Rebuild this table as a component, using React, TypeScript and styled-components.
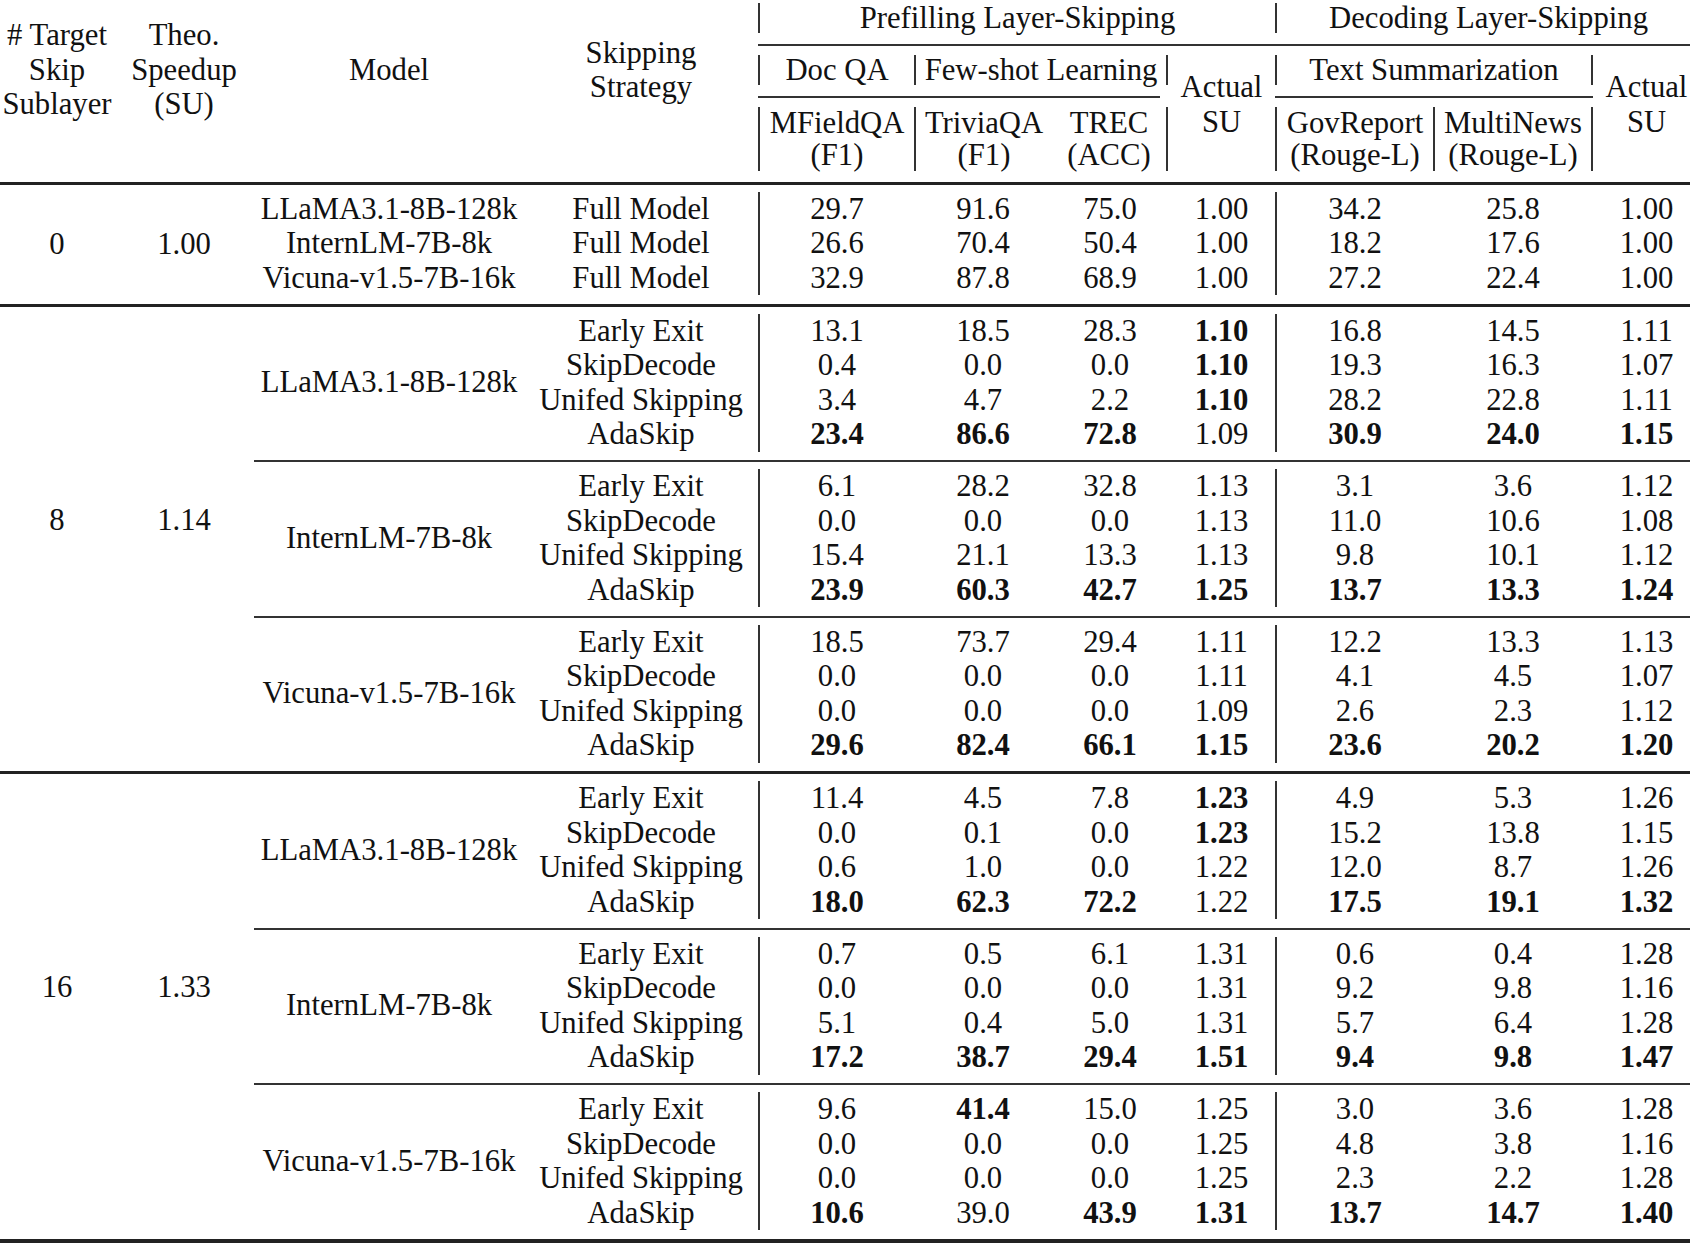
import React from "react";
import styled, { createGlobalStyle } from "styled-components";

const GlobalStyle = createGlobalStyle`
  html, body {
    margin: 0;
    padding: 0;
    background: #fff;
    overflow: hidden;
  }
  body {
    font-family: "Liberation Serif", "Times New Roman", serif;
    color: #111;
  }
`;

// column widths, left to right (last one runs a little past the viewport)
const COLS = [114, 140, 270, 234, 156, 138, 116, 107, 158, 160, 107];
const px = (list: number[]) => list.map((c) => `${c}px`).join(" ");

const THIN = "2px solid #333";
const BAR = "2px solid #333";

const Table = styled.div`
  width: 1700px;
  font-size: 30.7px;
  line-height: 34.5px;
`;

const Header = styled.div`
  display: grid;
  grid-template-columns: ${px(COLS)};
  grid-template-rows: 44px 2px 49.5px 2px 84px;
  border-bottom: 3px solid #222;
`;

const StubHead = styled.div<{ $col: number }>`
  grid-column: ${(p) => p.$col};
  grid-row: 1 / 6;
  align-self: center;
  margin-bottom: 41.5px;
  text-align: center;
  white-space: nowrap;
`;

const GroupHead = styled.div<{ $span: string }>`
  grid-column: ${(p) => p.$span};
  grid-row: 1;
  align-self: start;
  margin-top: 3px;
  line-height: 30px;
  text-align: center;
  border-left: ${BAR};
  white-space: nowrap;
`;

const TaskHead = styled.div<{ $span: string; $left?: boolean; $right?: boolean }>`
  grid-column: ${(p) => p.$span};
  grid-row: 3;
  align-self: start;
  margin-top: 9px;
  line-height: 30px;
  text-align: center;
  white-space: nowrap;
  border-left: ${(p) => (p.$left ? BAR : "none")};
  border-right: ${(p) => (p.$right ? BAR : "none")};
`;

const SpeedHead = styled.div<{ $span: string }>`
  grid-column: ${(p) => p.$span};
  grid-row: 3 / 6;
  align-self: center;
  margin-bottom: 18.5px;
  text-align: center;
  white-space: nowrap;
`;

const MetricHead = styled.div<{ $span: string; $left?: boolean; $right?: boolean }>`
  grid-column: ${(p) => p.$span};
  grid-row: 5;
  align-self: start;
  margin-top: 9.5px;
  line-height: 32px;
  text-align: center;
  white-space: nowrap;
  border-left: ${(p) => (p.$left ? BAR : "none")};
  border-right: ${(p) => (p.$right ? BAR : "none")};
`;

const HeadRule = styled.div<{ $row: number; $span: string; $trim?: number }>`
  grid-column: ${(p) => p.$span};
  grid-row: ${(p) => p.$row};
  margin-right: ${(p) => p.$trim ?? 0}px;
  background: #333;
`;

const Section = styled.div<{ $last?: boolean }>`
  display: flex;
  border-bottom: ${(p) => (p.$last ? 4 : 3)}px solid #222;
`;

const SpanCell = styled.div<{ $width: number; $lift?: number }>`
  flex: none;
  width: ${(p) => p.$width}px;
  box-sizing: border-box;
  display: flex;
  align-items: center;
  justify-content: center;
  padding-bottom: ${(p) => p.$lift ?? 0}px;
`;

const Stack = styled.div`
  flex: none;
  width: ${COLS.slice(2).reduce((a, b) => a + b, 0)}px;
  display: flex;
  flex-direction: column;
`;

const Group = styled.div`
  display: grid;
  grid-template-columns: ${px(COLS.slice(2))};
  grid-auto-rows: 34.5px;
  padding: 7px 0 8.5px;
  &:not(:last-child) {
    border-bottom: ${THIN};
  }
`;

const ModelName = styled.div<{ $span?: boolean }>`
  ${(p) => (p.$span ? "grid-column: 1; grid-row: 1 / span 4;" : "")}
  align-self: center;
  text-align: center;
  white-space: nowrap;
`;

const Cell = styled.div<{ $bar?: boolean; $bold?: boolean }>`
  text-align: center;
  white-space: nowrap;
  font-weight: ${(p) => (p.$bold ? 700 : 400)};
  border-left: ${(p) => (p.$bar ? BAR : "none")};
`;

const STRATEGIES = ["Early Exit", "SkipDecode", "Unifed Skipping", "AdaSkip"];

const fullModel = [
  ["LLaMA3.1-8B-128k", "29.7", "91.6", "75.0", "1.00", "34.2", "25.8", "1.00"],
  ["InternLM-7B-8k", "26.6", "70.4", "50.4", "1.00", "18.2", "17.6", "1.00"],
  ["Vicuna-v1.5-7B-16k", "32.9", "87.8", "68.9", "1.00", "27.2", "22.4", "1.00"],
];

// "*" marks a bold (best) value
const sections = [
  {
    target: "8",
    speedup: "1.14",
    groups: [
      {
        model: "LLaMA3.1-8B-128k",
        rows: [
          ["13.1", "18.5", "28.3", "*1.10", "16.8", "14.5", "1.11"],
          ["0.4", "0.0", "0.0", "*1.10", "19.3", "16.3", "1.07"],
          ["3.4", "4.7", "2.2", "*1.10", "28.2", "22.8", "1.11"],
          ["*23.4", "*86.6", "*72.8", "1.09", "*30.9", "*24.0", "*1.15"],
        ],
      },
      {
        model: "InternLM-7B-8k",
        rows: [
          ["6.1", "28.2", "32.8", "1.13", "3.1", "3.6", "1.12"],
          ["0.0", "0.0", "0.0", "1.13", "11.0", "10.6", "1.08"],
          ["15.4", "21.1", "13.3", "1.13", "9.8", "10.1", "1.12"],
          ["*23.9", "*60.3", "*42.7", "*1.25", "*13.7", "*13.3", "*1.24"],
        ],
      },
      {
        model: "Vicuna-v1.5-7B-16k",
        rows: [
          ["18.5", "73.7", "29.4", "1.11", "12.2", "13.3", "1.13"],
          ["0.0", "0.0", "0.0", "1.11", "4.1", "4.5", "1.07"],
          ["0.0", "0.0", "0.0", "1.09", "2.6", "2.3", "1.12"],
          ["*29.6", "*82.4", "*66.1", "*1.15", "*23.6", "*20.2", "*1.20"],
        ],
      },
    ],
  },
  {
    target: "16",
    speedup: "1.33",
    groups: [
      {
        model: "LLaMA3.1-8B-128k",
        rows: [
          ["11.4", "4.5", "7.8", "*1.23", "4.9", "5.3", "1.26"],
          ["0.0", "0.1", "0.0", "*1.23", "15.2", "13.8", "1.15"],
          ["0.6", "1.0", "0.0", "1.22", "12.0", "8.7", "1.26"],
          ["*18.0", "*62.3", "*72.2", "1.22", "*17.5", "*19.1", "*1.32"],
        ],
      },
      {
        model: "InternLM-7B-8k",
        rows: [
          ["0.7", "0.5", "6.1", "1.31", "0.6", "0.4", "1.28"],
          ["0.0", "0.0", "0.0", "1.31", "9.2", "9.8", "1.16"],
          ["5.1", "0.4", "5.0", "1.31", "5.7", "6.4", "1.28"],
          ["*17.2", "*38.7", "*29.4", "*1.51", "*9.4", "*9.8", "*1.47"],
        ],
      },
      {
        model: "Vicuna-v1.5-7B-16k",
        rows: [
          ["9.6", "*41.4", "15.0", "1.25", "3.0", "3.6", "1.28"],
          ["0.0", "0.0", "0.0", "1.25", "4.8", "3.8", "1.16"],
          ["0.0", "0.0", "0.0", "1.25", "2.3", "2.2", "1.28"],
          ["*10.6", "39.0", "*43.9", "*1.31", "*13.7", "*14.7", "*1.40"],
        ],
      },
    ],
  },
];

function Values({ values }: { values: string[] }) {
  return (
    <>
      {values.map((v, i) => (
        <Cell key={i} $bar={i === 0 || i === 4} $bold={v.startsWith("*")}>
          {v.replace("*", "")}
        </Cell>
      ))}
    </>
  );
}

export default function App() {
  return (
    <>
      <GlobalStyle />
      <Table>
        <Header>
          <StubHead $col={1}>
            # Target
            <br />
            Skip
            <br />
            Sublayer
          </StubHead>
          <StubHead $col={2}>
            Theo.
            <br />
            Speedup
            <br />
            (SU)
          </StubHead>
          <StubHead $col={3}>Model</StubHead>
          <StubHead $col={4}>
            Skipping
            <br />
            Strategy
          </StubHead>

          <GroupHead $span="5 / 9">Prefilling Layer-Skipping</GroupHead>
          <GroupHead $span="9 / 12">Decoding Layer-Skipping</GroupHead>
          <HeadRule $row={2} $span="5 / 12" />

          <TaskHead $span="5 / 6" $left>
            Doc QA
          </TaskHead>
          <TaskHead $span="6 / 8" $left $right>
            Few-shot Learning
          </TaskHead>
          <TaskHead $span="9 / 11" $left $right>
            Text Summarization
          </TaskHead>
          <HeadRule $row={4} $span="5 / 8" $trim={8} />
          <HeadRule $row={4} $span="9 / 11" />
          <SpeedHead $span="8 / 9">
            Actual
            <br />
            SU
          </SpeedHead>
          <SpeedHead $span="11 / 12">
            Actual
            <br />
            SU
          </SpeedHead>

          <MetricHead $span="5 / 6" $left>
            MFieldQA
            <br />
            (F1)
          </MetricHead>
          <MetricHead $span="6 / 7" $left>
            TriviaQA
            <br />
            (F1)
          </MetricHead>
          <MetricHead $span="7 / 8" $right>
            TREC
            <br />
            (ACC)
          </MetricHead>
          <MetricHead $span="9 / 10" $left>
            GovReport
            <br />
            (Rouge-L)
          </MetricHead>
          <MetricHead $span="10 / 11" $left $right>
            MultiNews
            <br />
            (Rouge-L)
          </MetricHead>
        </Header>

        <Section>
          <SpanCell $width={COLS[0]}>0</SpanCell>
          <SpanCell $width={COLS[1]}>1.00</SpanCell>
          <Stack>
            <Group>
              {fullModel.map(([model, ...values]) => (
                <React.Fragment key={model}>
                  <ModelName>{model}</ModelName>
                  <Cell>Full Model</Cell>
                  <Values values={values} />
                </React.Fragment>
              ))}
            </Group>
          </Stack>
        </Section>

        {sections.map((s, si) => (
          <Section key={s.target} $last={si === sections.length - 1}>
            <SpanCell $width={COLS[0]} $lift={37.5}>
              {s.target}
            </SpanCell>
            <SpanCell $width={COLS[1]} $lift={37.5}>
              {s.speedup}
            </SpanCell>
            <Stack>
              {s.groups.map((g) => (
                <Group key={g.model}>
                  <ModelName $span>{g.model}</ModelName>
                  {g.rows.map((values, ri) => (
                    <React.Fragment key={ri}>
                      <Cell>{STRATEGIES[ri]}</Cell>
                      <Values values={values} />
                    </React.Fragment>
                  ))}
                </Group>
              ))}
            </Stack>
          </Section>
        ))}
      </Table>
    </>
  );
}
